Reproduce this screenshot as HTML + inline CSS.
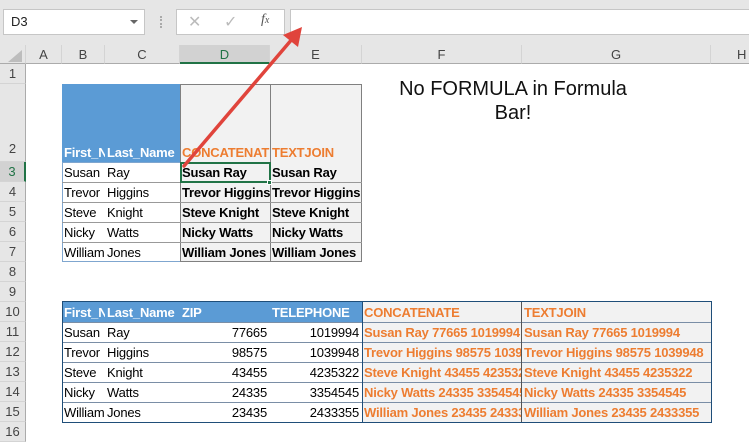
<!DOCTYPE html>
<html><head><meta charset="utf-8"><style>
*{margin:0;padding:0;box-sizing:border-box}
body{width:749px;height:437px;overflow:hidden;background:#fff;font-family:"Liberation Sans",sans-serif;position:relative}
.a{position:absolute}
.ch{position:absolute;top:45px;height:19px;font-size:13px;color:#444;text-align:center;line-height:19px;border-right:1px solid #d4d4d4;border-bottom:1px solid #ababab;background:#e6e6e6}
.rh{position:absolute;left:0;width:26px;font-size:13px;color:#444;text-align:center;background:#e6e6e6;border-bottom:1px solid #d4d4d4;border-right:1px solid #ababab}
.c{position:absolute;height:20px;line-height:21px;font-size:13px;white-space:nowrap;overflow:hidden;padding-left:2px;letter-spacing:-0.2px}
.b{font-weight:bold}
.o{color:#ed7d31;font-weight:bold}
.w{color:#fff;font-weight:bold}
.r{text-align:right;padding-right:3px}
</style></head><body>
<div class="a" style="left:0;top:0;width:749px;height:45px;background:#e6e6e6"></div>
<div class="a" style="left:3px;top:9px;width:142px;height:26px;background:#fff;border:1px solid #c6c6c6;font-size:13px;line-height:24px;padding-left:7px;color:#222">D3</div>
<div class="a" style="left:130px;top:20px;width:0;height:0;border-left:4px solid transparent;border-right:4px solid transparent;border-top:4px solid #666"></div>
<div class="a" style="left:160px;top:16px;width:2px;height:12px;border-left:2px dotted #aaa"></div>
<div class="a" style="left:176px;top:9px;width:109px;height:26px;background:#fff;border:1px solid #c6c6c6"></div>
<div class="a" style="left:188px;top:12px;font-size:16px;color:#bbb">✕</div>
<div class="a" style="left:224px;top:12px;font-size:16px;color:#bbb">✓</div>
<div class="a" style="left:261px;top:12px;font-size:14px;color:#555;font-style:italic;font-family:'Liberation Serif',serif">f<span style="font-size:10px">x</span></div>
<div class="a" style="left:290px;top:9px;width:460px;height:26px;background:#fff;border:1px solid #c6c6c6"></div>
<div class="ch" style="left:0;width:26px"></div>
<div class="a" style="left:8px;top:50px;width:0;height:0;border-left:14px solid transparent;border-bottom:12px solid #bdbdbd"></div>
<div class="ch" style="left:26px;width:36px">A</div>
<div class="ch" style="left:62px;width:43px">B</div>
<div class="ch" style="left:105px;width:75px">C</div>
<div class="ch" style="left:180px;width:90px;background:#d2d2d2;border-bottom:2px solid #217346;color:#217346">D</div>
<div class="ch" style="left:270px;width:92px">E</div>
<div class="ch" style="left:362px;width:160px">F</div>
<div class="ch" style="left:522px;width:189px">G</div>
<div class="ch" style="left:711px;width:40px;text-align:left;padding-left:26px">H</div>
<div class="rh" style="top:64px;height:20px;line-height:20px">1</div>
<div class="rh" style="top:84px;height:78px;line-height:130px">2</div>
<div class="rh" style="top:162px;height:20px;line-height:20px;background:#d2d2d2;color:#217346;border-right:2px solid #217346">3</div>
<div class="rh" style="top:182px;height:20px;line-height:20px">4</div>
<div class="rh" style="top:202px;height:20px;line-height:20px">5</div>
<div class="rh" style="top:222px;height:20px;line-height:20px">6</div>
<div class="rh" style="top:242px;height:20px;line-height:20px">7</div>
<div class="rh" style="top:262px;height:20px;line-height:20px">8</div>
<div class="rh" style="top:282px;height:20px;line-height:20px">9</div>
<div class="rh" style="top:302px;height:20px;line-height:20px">10</div>
<div class="rh" style="top:322px;height:20px;line-height:20px">11</div>
<div class="rh" style="top:342px;height:20px;line-height:20px">12</div>
<div class="rh" style="top:362px;height:20px;line-height:20px">13</div>
<div class="rh" style="top:382px;height:20px;line-height:20px">14</div>
<div class="rh" style="top:402px;height:20px;line-height:20px">15</div>
<div class="rh" style="top:422px;height:20px;line-height:20px">16</div>

<div class="a" style="left:62px;top:84px;width:118px;height:78px;background:#5b9bd5"></div>
<div class="a" style="left:180px;top:84px;width:182px;height:178px;background:#f2f2f2;border:1px solid #808080"></div>
<div class="a" style="left:270px;top:84px;width:1px;height:178px;background:#808080"></div>
<div class="c w" style="left:62px;top:142px;width:43px">First_Name</div>
<div class="c w" style="left:105px;top:142px;width:75px">Last_Name</div>
<div class="c o" style="left:180px;top:142px;width:90px">CONCATENATE</div>
<div class="c o" style="left:270px;top:142px;width:92px">TEXTJOIN</div>
<div class="a" style="left:62px;top:162px;width:118px;height:100px;border:1px solid #7fa6cf;border-right:none"></div>
<div class="a" style="left:62px;top:182px;width:300px;height:1px;background:#999"></div>
<div class="a" style="left:62px;top:202px;width:300px;height:1px;background:#999"></div>
<div class="a" style="left:62px;top:222px;width:300px;height:1px;background:#999"></div>
<div class="a" style="left:62px;top:242px;width:300px;height:1px;background:#999"></div>
<div class="a" style="left:180px;top:162px;width:91px;height:21px;border:2px solid #217346"></div>
<div class="a" style="left:267px;top:180px;width:5px;height:5px;background:#217346;border:1px solid #fff"></div>
<div class="c" style="left:62px;top:162px;width:43px">Susan</div><div class="c" style="left:105px;top:162px;width:75px">Ray</div>
<div class="c" style="left:62px;top:182px;width:43px">Trevor</div><div class="c" style="left:105px;top:182px;width:75px">Higgins</div>
<div class="c" style="left:62px;top:202px;width:43px">Steve</div><div class="c" style="left:105px;top:202px;width:75px">Knight</div>
<div class="c" style="left:62px;top:222px;width:43px">Nicky</div><div class="c" style="left:105px;top:222px;width:75px">Watts</div>
<div class="c" style="left:62px;top:242px;width:43px">William</div><div class="c" style="left:105px;top:242px;width:75px">Jones</div>
<div class="c b" style="left:180px;top:162px;width:90px">Susan Ray</div><div class="c b" style="left:270px;top:162px;width:92px">Susan Ray</div>
<div class="c b" style="left:180px;top:182px;width:90px">Trevor Higgins</div><div class="c b" style="left:270px;top:182px;width:92px">Trevor Higgins</div>
<div class="c b" style="left:180px;top:202px;width:90px">Steve Knight</div><div class="c b" style="left:270px;top:202px;width:92px">Steve Knight</div>
<div class="c b" style="left:180px;top:222px;width:90px">Nicky Watts</div><div class="c b" style="left:270px;top:222px;width:92px">Nicky Watts</div>
<div class="c b" style="left:180px;top:242px;width:90px">William Jones</div><div class="c b" style="left:270px;top:242px;width:92px">William Jones</div>

<div class="a" style="left:362px;top:77px;width:302px;text-align:center;font-size:20px;line-height:24px;color:#111">No FORMULA in Formula<br>Bar!</div>

<div class="a" style="left:62px;top:302px;width:300px;height:20px;background:#5b9bd5"></div>
<div class="a" style="left:362px;top:302px;width:349px;height:120px;background:#f2f2f2"></div>
<div class="a" style="left:62px;top:322px;width:649px;height:1px;background:#7a8ea6"></div>
<div class="a" style="left:62px;top:342px;width:649px;height:1px;background:#7a8ea6"></div>
<div class="a" style="left:62px;top:362px;width:649px;height:1px;background:#7a8ea6"></div>
<div class="a" style="left:62px;top:382px;width:649px;height:1px;background:#7a8ea6"></div>
<div class="a" style="left:62px;top:402px;width:649px;height:1px;background:#7a8ea6"></div>
<div class="a" style="left:362px;top:302px;width:1px;height:120px;background:#1f4e79"></div>
<div class="a" style="left:521px;top:302px;width:1px;height:120px;background:#555"></div>
<div class="a" style="left:62px;top:301px;width:650px;height:122px;border:1px solid #1f4e79"></div>
<div class="c w" style="left:62px;top:302px;width:43px">First_Name</div>
<div class="c w" style="left:105px;top:302px;width:75px">Last_Name</div>
<div class="c w" style="left:180px;top:302px;width:90px">ZIP</div>
<div class="c w" style="left:270px;top:302px;width:92px">TELEPHONE</div>
<div class="c o" style="left:362px;top:302px;width:159px">CONCATENATE</div>
<div class="c o" style="left:522px;top:302px;width:189px">TEXTJOIN</div>

<div class="c" style="left:62px;top:322px;width:43px">Susan</div><div class="c" style="left:105px;top:322px;width:75px">Ray</div><div class="c r" style="left:180px;top:322px;width:90px">77665</div><div class="c r" style="left:270px;top:322px;width:92px">1019994</div>
<div class="c o" style="left:362px;top:322px;width:159px">Susan Ray 77665 1019994</div><div class="c o" style="left:522px;top:322px;width:189px">Susan Ray 77665 1019994</div>
<div class="c" style="left:62px;top:342px;width:43px">Trevor</div><div class="c" style="left:105px;top:342px;width:75px">Higgins</div><div class="c r" style="left:180px;top:342px;width:90px">98575</div><div class="c r" style="left:270px;top:342px;width:92px">1039948</div>
<div class="c o" style="left:362px;top:342px;width:159px">Trevor Higgins 98575 1039948</div><div class="c o" style="left:522px;top:342px;width:189px">Trevor Higgins 98575 1039948</div>
<div class="c" style="left:62px;top:362px;width:43px">Steve</div><div class="c" style="left:105px;top:362px;width:75px">Knight</div><div class="c r" style="left:180px;top:362px;width:90px">43455</div><div class="c r" style="left:270px;top:362px;width:92px">4235322</div>
<div class="c o" style="left:362px;top:362px;width:159px">Steve Knight 43455 4235322</div><div class="c o" style="left:522px;top:362px;width:189px">Steve Knight 43455 4235322</div>
<div class="c" style="left:62px;top:382px;width:43px">Nicky</div><div class="c" style="left:105px;top:382px;width:75px">Watts</div><div class="c r" style="left:180px;top:382px;width:90px">24335</div><div class="c r" style="left:270px;top:382px;width:92px">3354545</div>
<div class="c o" style="left:362px;top:382px;width:159px">Nicky Watts 24335 3354545</div><div class="c o" style="left:522px;top:382px;width:189px">Nicky Watts 24335 3354545</div>
<div class="c" style="left:62px;top:402px;width:43px">William</div><div class="c" style="left:105px;top:402px;width:75px">Jones</div><div class="c r" style="left:180px;top:402px;width:90px">23435</div><div class="c r" style="left:270px;top:402px;width:92px">2433355</div>
<div class="c o" style="left:362px;top:402px;width:159px">William Jones 23435 2433355</div><div class="c o" style="left:522px;top:402px;width:189px">William Jones 23435 2433355</div>

<svg class="a" style="left:0;top:0" width="749" height="437">
<line x1="184" y1="166" x2="293" y2="38" stroke="#e0443c" stroke-width="3.5" stroke-linecap="round"/>
<polygon points="302,27 298,47 283,35" fill="#e0443c"/>
</svg>
</body></html>
